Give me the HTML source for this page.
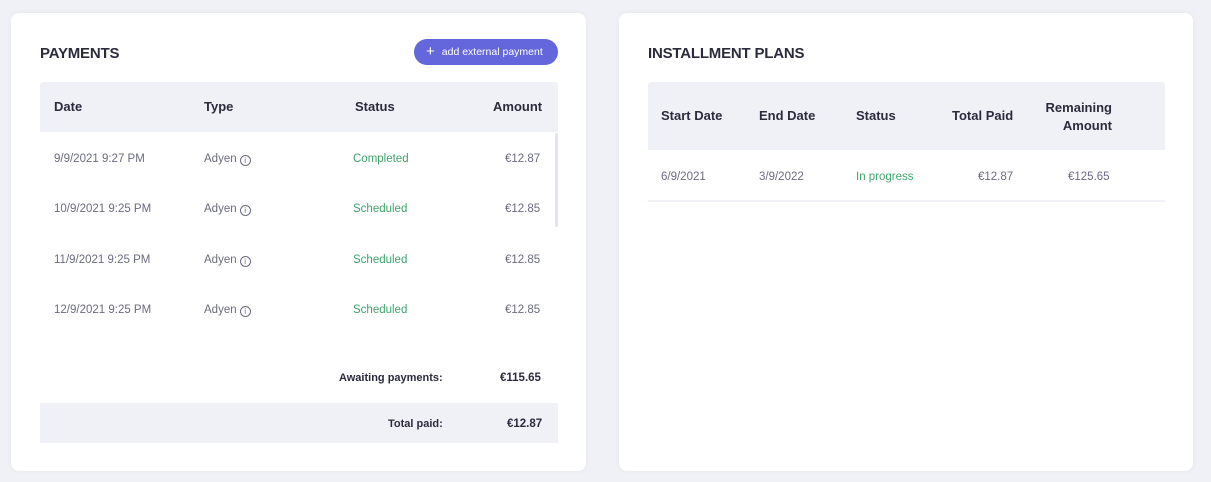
<!DOCTYPE html>
<html><head><style>
*{margin:0;padding:0;box-sizing:border-box}
body{width:1211px;height:482px;background:#f0f1f6;font-family:"Liberation Sans",sans-serif;position:relative;overflow:hidden;color:#2b2b3d}
.card{position:absolute;top:13px;height:458px;background:#fff;border-radius:8px;box-shadow:0 0 6px rgba(0,0,0,.05)}
.t{position:absolute;font-size:15px;font-weight:bold;letter-spacing:-.2px}
.h{position:absolute;font-size:13px;font-weight:bold;color:#2b2b3d}
.c{position:absolute;font-size:11.5px;color:#6b6b80;transform:translateY(-50%);line-height:14px;white-space:nowrap}
.g{color:#3fa36c}
.r{text-align:right}
.i{display:inline-block;width:11px;height:11px;border:1px solid #6b6b80;border-radius:50%;font-size:8px;line-height:9px;text-align:center;vertical-align:-1px;margin-left:3px}
</style></head><body>
<div class="card" style="left:11px;width:575px"></div>
<div class="card" style="left:619px;width:574px"></div>

<div class="t" style="left:40px;top:45px">PAYMENTS</div>
<div style="position:absolute;left:414px;top:39px;width:144px;height:26px;background:#6466dc;border-radius:13px;color:#fff;font-size:10.5px;line-height:26px;padding-left:12px"><span style="font-size:15px;vertical-align:-1px;margin-right:7px">+</span>add external payment</div>
<div style="position:absolute;left:40px;top:82px;width:518px;height:50px;background:#f0f1f6;border-radius:3px 3px 0 0"></div>
<div class="h" style="left:54px;top:99px">Date</div>
<div class="h" style="left:204px;top:99px">Type</div>
<div class="h" style="left:355px;top:99px">Status</div>
<div class="h" style="left:493px;top:99px">Amount</div>
<div style="position:absolute;left:555px;top:133px;width:3px;height:94px;background:#e4e5ea;border-radius:2px"></div>

<div class="c" style="left:54px;top:159px">9/9/2021 9:27 PM</div>
<div class="c" style="left:204px;top:159px">Adyen<span class="i">i</span></div>
<div class="c g" style="left:353px;top:159px">Completed</div>
<div class="c" style="left:505px;top:159px">€12.87</div>

<div class="c" style="left:54px;top:209px">10/9/2021 9:25 PM</div>
<div class="c" style="left:204px;top:209px">Adyen<span class="i">i</span></div>
<div class="c g" style="left:353px;top:209px">Scheduled</div>
<div class="c" style="left:505px;top:209px">€12.85</div>

<div class="c" style="left:54px;top:260px">11/9/2021 9:25 PM</div>
<div class="c" style="left:204px;top:260px">Adyen<span class="i">i</span></div>
<div class="c g" style="left:353px;top:260px">Scheduled</div>
<div class="c" style="left:505px;top:260px">€12.85</div>

<div class="c" style="left:54px;top:310px">12/9/2021 9:25 PM</div>
<div class="c" style="left:204px;top:310px">Adyen<span class="i">i</span></div>
<div class="c g" style="left:353px;top:310px">Scheduled</div>
<div class="c" style="left:505px;top:310px">€12.85</div>

<div class="c" style="left:339px;top:378px;font-weight:bold;color:#2b2b3d;font-size:11px">Awaiting payments:</div>
<div class="c" style="left:500px;top:378px;font-weight:bold;color:#2b2b3d;font-size:11.5px">€115.65</div>
<div style="position:absolute;left:40px;top:403px;width:518px;height:40px;background:#f0f1f6"></div>
<div class="c" style="left:388px;top:424px;font-weight:bold;color:#2b2b3d;font-size:11px">Total paid:</div>
<div class="c" style="left:507px;top:424px;font-weight:bold;color:#2b2b3d;font-size:11.5px">€12.87</div>

<div class="t" style="left:648px;top:45px">INSTALLMENT PLANS</div>
<div style="position:absolute;left:648px;top:82px;width:517px;height:68px;background:#f0f1f6;border-radius:3px 3px 0 0"></div>
<div class="h" style="left:661px;top:108px">Start Date</div>
<div class="h" style="left:759px;top:108px">End Date</div>
<div class="h" style="left:856px;top:108px">Status</div>
<div class="h" style="left:952px;top:108px">Total Paid</div>
<div class="h r" style="left:1030px;top:99px;width:82px;line-height:18px">Remaining<br>Amount</div>
<div class="c" style="left:661px;top:177px">6/9/2021</div>
<div class="c" style="left:759px;top:177px">3/9/2022</div>
<div class="c g" style="left:856px;top:177px">In progress</div>
<div class="c" style="left:978px;top:177px">€12.87</div>
<div class="c" style="left:1068px;top:177px">€125.65</div>
<div style="position:absolute;left:648px;top:200px;width:517px;height:2px;background:#f0f1f6"></div>
</body></html>
